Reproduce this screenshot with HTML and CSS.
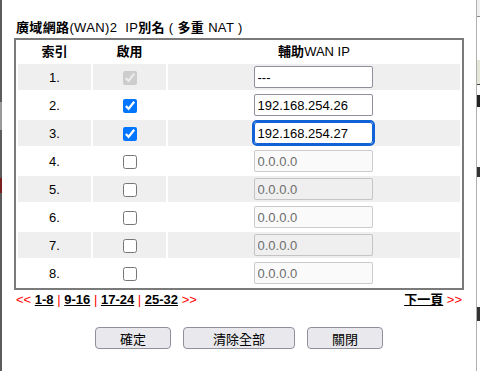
FILE: index.html
```html
<!DOCTYPE html>
<html>
<head>
<meta charset="utf-8">
<link rel="stylesheet" href="styles.css">
</head>
<body>
<div class="screen">
  <div class="edge-left">
    <div class="el-a"></div><div class="el-b"></div><div class="el-c"></div><div class="el-d"></div><div class="el-e"></div>
  </div>
  <div class="popup">
    <div class="title"><b>廣域網路</b>(WAN)2&nbsp; IP<b>別名</b> ( <b>多重</b> NAT )</div>
    <table class="grid">
      <thead>
        <tr><th class="c1">索引</th><th class="c2">啟用</th><th class="c3"><b>輔助</b>WAN IP</th></tr>
      </thead>
      <tbody>
        <tr class="alt"><td class="c1">1.</td><td class="c2"><input type="checkbox" class="chk" checked disabled></td><td class="c3"><input class="ip" type="text" value="---"></td></tr>
        <tr><td class="c1">2.</td><td class="c2"><input type="checkbox" class="chk" checked></td><td class="c3"><input class="ip" type="text" value="192.168.254.26"></td></tr>
        <tr class="alt"><td class="c1">3.</td><td class="c2"><input type="checkbox" class="chk" checked></td><td class="c3"><input class="ip focused" type="text" value="192.168.254.27"></td></tr>
        <tr><td class="c1">4.</td><td class="c2"><input type="checkbox" class="chk"></td><td class="c3"><input class="ip" type="text" value="0.0.0.0" disabled></td></tr>
        <tr class="alt"><td class="c1">5.</td><td class="c2"><input type="checkbox" class="chk"></td><td class="c3"><input class="ip" type="text" value="0.0.0.0" disabled></td></tr>
        <tr><td class="c1">6.</td><td class="c2"><input type="checkbox" class="chk"></td><td class="c3"><input class="ip" type="text" value="0.0.0.0" disabled></td></tr>
        <tr class="alt"><td class="c1">7.</td><td class="c2"><input type="checkbox" class="chk"></td><td class="c3"><input class="ip" type="text" value="0.0.0.0" disabled></td></tr>
        <tr><td class="c1">8.</td><td class="c2"><input type="checkbox" class="chk"></td><td class="c3"><input class="ip" type="text" value="0.0.0.0" disabled></td></tr>
      </tbody>
    </table>
    <div class="pager">
      <div class="pages"><span class="red">&lt;&lt;</span> <a>1-8</a> <span class="red">|</span> <a>9-16</a> <span class="red">|</span> <a>17-24</a> <span class="red">|</span> <a>25-32</a> <span class="red">&gt;&gt;</span></div>
      <div class="next"><a>下一頁</a> <span class="red">&gt;&gt;</span></div>
    </div>
    <div class="buttons">
      <button class="btn w76">確定</button>
      <button class="btn w112">清除全部</button>
      <button class="btn w76">關閉</button>
    </div>
  </div>
  <div class="edge-right">
    <div class="er-a"></div><div class="er-b"></div><div class="er-c"></div><div class="er-d"></div><div class="er-e"></div><div class="er-f"></div><div class="er-g"></div><div class="er-h"></div><div class="er-i"></div>
  </div>
</div>
</body>
</html>
```
FILE: styles.css
```css
html, body {
  margin: 0;
  padding: 0;
  background: #fff;
}
body {
  font-family: "Liberation Sans", Arial, "Noto Sans CJK TC", sans-serif;
  font-size: 13px;
  color: #000;
}
.screen {
  display: flex;
  width: 480px;
  height: 371px;
  overflow: hidden;
}
.edge-left {
  width: 2px;
  display: flex;
  flex-direction: column;
  background: #5c5c5c;
}
.el-a { height: 102px; background: #5c5c5c; }
.el-b { height: 28px; background: #9a9a9a; }
.el-c { height: 48px; background: #5c5c5c; }
.el-d { height: 15px; background: #7a2020; }
.el-e { flex: 1; background: #5c5c5c; }

.popup {
  width: 474px;
  padding-left: 12px;
  box-sizing: border-box;
  background: #fff;
}
.title {
  padding-top: 20px;
  padding-left: 2px;
  height: 16px;
  line-height: 16px;
  white-space: nowrap;
  font-size: 13px;
  letter-spacing: 0.35px;
}
.title b, .c3 b {
  font-weight: bold;
}
.grid {
  margin-top: 2px;
  width: 450px;
  border: 2px solid #7a7a7a;
  border-spacing: 2px;
  table-layout: fixed;
}
.grid th {
  height: 20px;
  padding: 0;
  font-weight: bold;
  font-size: 13px;
  text-align: center;
  line-height: 20px;
}
.grid th.c3 { font-weight: normal; }
.grid td {
  height: 26px;
  padding: 0;
  text-align: center;
  vertical-align: middle;
}
.c1 { width: 73px; }
.c2 { width: 73px; }
.c3 { width: 292px; }
.alt td { background: #efefef; }
.chk {
  width: 14px;
  height: 14px;
  margin: 0;
  vertical-align: middle;
}
.ip {
  display: block;
  margin: 0 auto;
  width: 119px;
  height: 22px;
  box-sizing: border-box;
  border: 1px solid #8f8f9d;
  border-radius: 2px;
  padding: 0 3px;
  font-family: "Liberation Sans", Arial, sans-serif;
  font-size: 13px;
  color: #000;
  background: #fff;
  transform: translateX(-1px);
}
.ip:disabled {
  background: rgba(239, 239, 239, 0.3);
  border-color: rgba(118, 118, 118, 0.35);
  color: #6d6d6d;
}
.ip.focused {
  outline: 2px solid #1062d6;
  outline-offset: 0;
  border-color: #1062d6;
  border-radius: 3px;
}
.pager {
  width: 450px;
  display: flex;
  justify-content: space-between;
  box-sizing: border-box;
  padding: 0 2px;
  margin-top: 1px;
  line-height: 17px;
  font-weight: bold;
  white-space: nowrap;
}
.pager a {
  color: #000;
  text-decoration: underline;
}
.red {
  color: #f00;
  font-weight: normal;
}
.buttons {
  width: 450px;
  display: flex;
  justify-content: center;
  gap: 12px;
  margin-top: 19px;
}
.btn {
  height: 22px;
  box-sizing: border-box;
  background: #e9e9ed;
  border: 1px solid #8f8f9d;
  border-radius: 4px;
  font-family: "Liberation Sans", Arial, "Noto Sans CJK TC", sans-serif;
  font-size: 13px;
  color: #000;
  padding: 0;
}
.w76 { width: 76px; }
.w112 { width: 112px; }

.edge-right {
  width: 4px;
  display: flex;
  flex-direction: column;
  border-left: 1px solid #b0b0b0;
  box-sizing: border-box;
  background: #fff;
}
.er-a { height: 16px; background: #f0f0f0; border-bottom: 1px solid #8a8a8a; }
.er-b { height: 43px; background: #fff; }
.er-c { height: 24px; background: #e4e6d8; border-bottom: 1px solid #444; }
.er-d { height: 10px; }
.er-e { height: 12px; background: #222; }
.er-f { height: 60px; }
.er-g { height: 10px; background: #333; }
.er-h { height: 130px; }
.er-i { height: 14px; background: #333; }
```
